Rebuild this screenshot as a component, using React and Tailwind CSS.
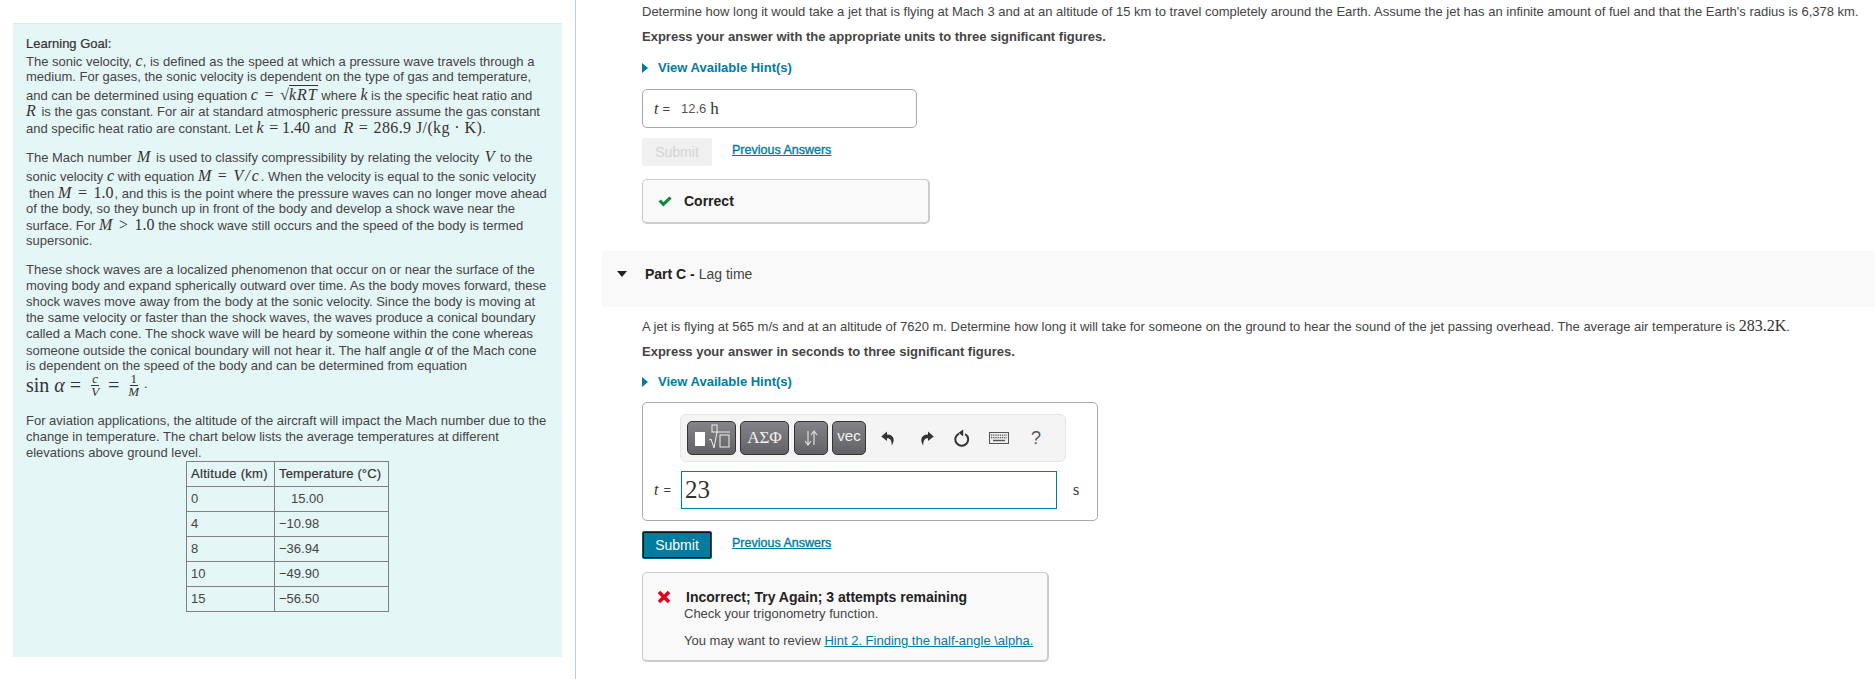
const sans = { fontFamily: '"Liberation Sans", Arial, sans-serif' };

function M({ children, i = false, className = "" }) {
  return <span className={`font-['Liberation_Serif',serif] text-[16px] text-[#333] ${i ? "italic" : ""} ${className}`}>{children}</span>;
}

function L({ children, className = "" }) {
  return <div className={`whitespace-nowrap h-[16px] leading-[16px] ${className}`}>{children}</div>;
}

function Frac({ a, b }) {
  return (
    <span className="inline-flex flex-col items-center align-middle font-['Liberation_Serif',serif] text-[13px] leading-[12px] text-[#333] mx-[5px]">
      <span className="border-b border-[#333] px-[1px]">{a}</span>
      <span>{b}</span>
    </span>
  );
}

function Hint({ className = "" }) {
  return (
    <div className={`flex items-center h-[16px] text-[#007c9e] font-bold text-[13px] ${className}`}>
      <svg width="6" height="10" viewBox="0 0 6 10" className="mr-[10px]"><path d="M0 0 L6 5 L0 10 Z" fill="#007c9e" /></svg>
      View Available Hint(s)
    </div>
  );
}

const rows = [
  ["0", "15.00", true],
  ["4", "−10.98"],
  ["8", "−36.94"],
  ["10", "−49.90"],
  ["15", "−56.50"],
];

function Tool({ w, children, className = "" }) {
  return (
    <div className={`${w} ${className} h-[34px] rounded-[5px] border border-[#333] bg-gradient-to-b from-[#858589] to-[#626266] flex items-center justify-center text-[#f2f2f2]`}>
      {children}
    </div>
  );
}

export default function App() {
  return (
    <div className="flex h-[679px] w-[1875px] overflow-hidden bg-white text-[13px] text-[#444]" style={sans}>
      <aside className="w-[576px] shrink-0 border-r border-[#bcd0e6] pl-[13px] pr-[13px] pt-[23px]">
        <div className="h-[634px] bg-[#e5f6f7] border-t border-[#dfe8e8] pl-[13px] pt-[12px]">
          <L className="text-[#333] [-webkit-text-stroke:0.2px_#333]">Learning Goal:</L>
          <L className="mt-[1px]">The sonic velocity, <M i>c</M>, is defined as the speed at which a pressure wave travels through a</L>
          <L>medium. For gases, the sonic velocity is dependent on the type of gas and temperature,</L>
          <L className="mt-[2px]">and can be determined using equation <M i>c</M> <M className="mx-[3px]">=</M> <M>√</M><M i className="border-t border-[#333] tracking-[1px]">kRT</M> where <M i>k</M> is the specific heat ratio and</L>
          <L><M i className="pr-[2px]">R</M> is the gas constant. For air at standard atmospheric pressure assume the gas constant</L>
          <L className="mt-[1px]">and specific heat ratio are constant. Let <M i>k</M> <M className="ml-[2px]">=</M> <M className="mr-[1px]">1.40</M> and &nbsp;<M i>R</M> <M className="mx-[2px]">=</M> <M className="tracking-[0.4px]">286.9 J/(kg · K)</M>.</L>

          <L className="mt-[13px]">The Mach number <M i className="mx-[2px]">M</M> is used to classify compressibility by relating the velocity <M i className="mx-[2px]">V</M> to the</L>
          <L className="mt-[3px]">sonic velocity <M i>c</M> with equation <M i>M</M> <M className="mx-[3px]">=</M> <M i className="tracking-[2px]">V/c</M>. When the velocity is equal to the sonic velocity</L>
          <L className="pl-[3px] mt-[1px]">then <M i>M</M> <M className="mx-[3px]">=</M> <M className="mr-[1px]">1.0</M>, and this is the point where the pressure waves can no longer move ahead</L>
          <L>of the body, so they bunch up in front of the body and develop a shock wave near the</L>
          <L>surface. For <M i>M</M> <M className="mx-[3px]">&gt;</M> <M>1.0</M> the shock wave still occurs and the speed of the body is termed</L>
          <L>supersonic.</L>

          <L className="mt-[13px]">These shock waves are a localized phenomenon that occur on or near the surface of the</L>
          <L>moving body and expand spherically outward over time. As the body moves forward, these</L>
          <L>shock waves move away from the body at the sonic velocity. Since the body is moving at</L>
          <L>the same velocity or faster than the shock waves, the waves produce a conical boundary</L>
          <L>called a Mach cone. The shock wave will be heard by someone within the cone whereas</L>
          <L>someone outside the conical boundary will not hear it. The half angle <M i>α</M> of the Mach cone</L>
          <L>is dependent on the speed of the body and can be determined from equation</L>
          <div className="h-[24px] -mt-[1px] flex items-center whitespace-nowrap text-[20px] font-['Liberation_Serif',serif] text-[#333]">
            sin <i className="ml-[5px]">α</i><span className="mx-[5px]">=</span><Frac a={<i>c</i>} b={<i>V</i>} /><span className="mx-[4px]">=</span><Frac a="1" b={<i>M</i>} /><span className="text-[12px] self-end mb-[4px]">.</span>
          </div>

          <L className="mt-[16px]">For aviation applications, the altitude of the aircraft will impact the Mach number due to the</L>
          <L>change in temperature. The chart below lists the average temperatures at different</L>
          <L>elevations above ground level.</L>

          <table className="ml-[160px] border-collapse text-[13px]">
            <thead>
              <tr className="h-[25px]">
                <th className="w-[88px] border border-[#808080] px-[4px] text-left font-normal text-[#333] tracking-[0.3px] [-webkit-text-stroke:0.2px_#333] whitespace-nowrap">Altitude (km)</th>
                <th className="w-[114px] border border-[#808080] px-[4px] text-left font-normal text-[#333] tracking-[0.15px] [-webkit-text-stroke:0.2px_#333] whitespace-nowrap">Temperature (°C)</th>
              </tr>
            </thead>
            <tbody>
              {rows.map(([a, t, pad]) => (
                <tr key={a} className="h-[25px]">
                  <td className="border border-[#808080] px-[4px]">{a}</td>
                  <td className={`border border-[#808080] px-[4px] ${pad ? "pl-[16px]" : ""}`}>{t}</td>
                </tr>
              ))}
            </tbody>
          </table>
        </div>
      </aside>

      <main className="flex-1 min-w-0">
        <div className="pl-[66px]">
          <div className="h-[16px] leading-[16px] mt-[4px] whitespace-nowrap">Determine how long it would take a jet that is flying at Mach 3 and at an altitude of 15 km to travel completely around the Earth. Assume the jet has an infinite amount of fuel and that the Earth's radius is 6,378 km.</div>
          <div className="h-[16px] leading-[16px] mt-[9px] font-bold">Express your answer with the appropriate units to three significant figures.</div>
          <Hint className="mt-[15px]" />
          <div className="mt-[13px] w-[275px] h-[39px] border border-[#aaa] rounded-[5px] flex items-center pl-[11px]">
            <M i className="text-[15px]">t</M><span className="ml-[4px]">=</span><span className="ml-[11px] text-[#555]">12.6</span><M className="ml-[4px] text-[17px]">h</M>
          </div>
          <div className="mt-[10px] flex items-start">
            <div className="w-[70px] h-[28px] rounded-[2px] bg-[#f0f0f0] text-[#d4d4d4] text-[14px] flex items-center justify-center">Submit</div>
            <a className="ml-[20px] mt-[3px] text-[12.5px] text-[#007c9e] underline [-webkit-text-stroke:0.35px_#007c9e]">Previous Answers</a>
          </div>
          <div className="mt-[13px] w-[288px] h-[45px] rounded-[5px] border border-[#ccc] border-r-2 border-b-2 bg-[#f9f9f9] flex items-center pl-[15px] font-bold text-[14px] text-[#222]">
            <svg width="14" height="11" viewBox="0 0 14 11" className="mr-[9px]"><path d="M0.5 5.5 L3 3.5 L5.3 6.2 L11.3 0.5 L13.7 2.5 L5.3 10.5 Z" fill="#0a8a3c" /></svg>
            <span className="ml-[3px]">Correct</span>
          </div>
        </div>

        <div className="mt-[27px] ml-[26px] h-[56px] bg-[#f9f9f9] flex items-start pt-[15px]">
          <svg width="10" height="6" viewBox="0 0 10 6" className="ml-[15px] mt-[5px]"><path d="M0 0 L10 0 L5 6 Z" fill="#222" /></svg>
          <span className="ml-[18px] font-bold text-[14px] text-[#222] leading-[16px]">Part C - <span className="font-normal text-[#444]">Lag time</span></span>
        </div>

        <div className="pl-[66px]">
          <div className="h-[16px] leading-[16px] mt-[11px] whitespace-nowrap">A jet is flying at 565 m/s and at an altitude of 7620 m. Determine how long it will take for someone on the ground to hear the sound of the jet passing overhead. The average air temperature is <M>283.2K</M>.</div>
          <div className="h-[16px] leading-[16px] mt-[10px] font-bold">Express your answer in seconds to three significant figures.</div>
          <Hint className="mt-[14px]" />

          <div className="mt-[12px] w-[456px] h-[119px] border border-[#aaa] rounded-[5px] pl-[37px] pt-[11px]">
            <div className="w-[386px] h-[48px] bg-[#f4f4f4] border border-[#e6e6e6] rounded-[6px] flex items-center pl-[6px]">
              <Tool w="w-[49px]">
                <svg width="38" height="28" viewBox="0 0 38 28">
                  <rect x="2" y="8" width="10" height="14" fill="#fff" />
                  <rect x="19" y="1" width="5" height="7" fill="none" stroke="#eee" />
                  <path d="M16 16 L18 15 L21 24 L24 8 L37 8" fill="none" stroke="#eee" />
                  <rect x="27" y="11" width="9" height="12" fill="none" stroke="#eee" />
                </svg>
              </Tool>
              <Tool w="w-[49px]" className="ml-[4px]"><span className="font-['Liberation_Serif',serif] text-[17px]">ΑΣΦ</span></Tool>
              <Tool w="w-[34px]" className="ml-[5px]">
                <svg width="14" height="16" viewBox="0 0 14 16" fill="none" stroke="#ddd" strokeWidth="1.2"><path d="M4 1 V14 M1 11 L4 15 L7 11 M10 15 V2 M7 5 L10 1 L13 5" /></svg>
              </Tool>
              <Tool w="w-[34px]" className="ml-[4px]"><span className="text-[15px] -mt-[3px]">vec</span></Tool>
              <div className="ml-[12px] w-[19px] flex justify-center">
                <svg width="14" height="15" viewBox="0 0 14 15"><path d="M6 0.5 L0.3 5.5 L6 10 V7.2 C9.6 7.2 10.8 9.8 10.8 14.5 C13.8 10 14 3.6 6 3.4 Z" fill="#333" /></svg>
              </div>
              <div className="ml-[20px] w-[19px] flex justify-center">
                <svg width="14" height="15" viewBox="0 0 14 15"><path d="M8 0.5 L13.7 5.5 L8 10 V7.2 C4.4 7.2 3.2 9.8 3.2 14.5 C0.2 10 0 3.6 8 3.4 Z" fill="#333" /></svg>
              </div>
              <div className="ml-[16px] w-[19px] flex justify-center">
                <svg width="16" height="18" viewBox="0 0 16 18" fill="none"><path d="M11.2 5 A6.4 6.4 0 1 1 5 4.6" stroke="#333" strokeWidth="2" /><path d="M9.2 0.5 L9.2 7.5 L4.6 3.8 Z" fill="#333" /></svg>
              </div>
              <div className="ml-[18px] w-[20px] flex justify-center">
                <svg width="20" height="12" viewBox="0 0 20 12"><rect x="0.5" y="0.5" width="19" height="11" fill="#eee" stroke="#555" /><path d="M2 3.2 H18 M2 5.6 H18" stroke="#555" strokeWidth="1.2" strokeDasharray="1.3 0.9" /><path d="M4 8.5 H16" stroke="#555" strokeWidth="1.4" /></svg>
              </div>
              <span className="ml-[22px] text-[18px] text-[#555]">?</span>
            </div>
            <div className="-ml-[26px] mt-[9px] flex items-center">
              <M i className="text-[15px]">t</M><span className="ml-[5px]">=</span>
              <div className="ml-[10px] w-[376px] h-[38px] border border-[#007c9e] bg-white pl-[3px] flex items-center font-['Liberation_Serif',serif] text-[25px] text-[#333]">23</div>
              <M className="ml-[16px] text-[14px]">s</M>
            </div>
          </div>

          <div className="mt-[10px] flex items-start">
            <div className="w-[70px] h-[28px] rounded-[2px] bg-[#007c9e] border border-[#005a75] outline outline-1 -outline-offset-2 outline-[#111] text-white flex items-center justify-center text-[14px]">Submit</div>
            <a className="ml-[20px] mt-[3px] text-[12.5px] text-[#007c9e] underline [-webkit-text-stroke:0.35px_#007c9e]">Previous Answers</a>
          </div>

          <div className="mt-[13px] w-[407px] h-[90px] rounded-[5px] border border-[#ccc] border-r-2 border-b-2 bg-[#f9f9f9] pl-[14px] pt-[16px]">
            <div className="flex items-center h-[16px] font-bold text-[14px] text-[#222]">
              <svg width="14" height="14" viewBox="0 0 14 14"><path d="M2 2 L12 12 M12 2 L2 12" stroke="#e2001a" strokeWidth="3.6" /></svg>
              <span className="ml-[15px]">Incorrect; Try Again; 3 attempts remaining</span>
            </div>
            <div className="pl-[27px] h-[16px] leading-[16px] mt-[1px]">Check your trigonometry function.</div>
            <div className="pl-[27px] h-[16px] leading-[16px] mt-[11px]">You may want to review <a className="text-[#007c9e] underline">Hint 2. Finding the half-angle \alpha.</a></div>
          </div>
        </div>
      </main>
    </div>
  );
}
